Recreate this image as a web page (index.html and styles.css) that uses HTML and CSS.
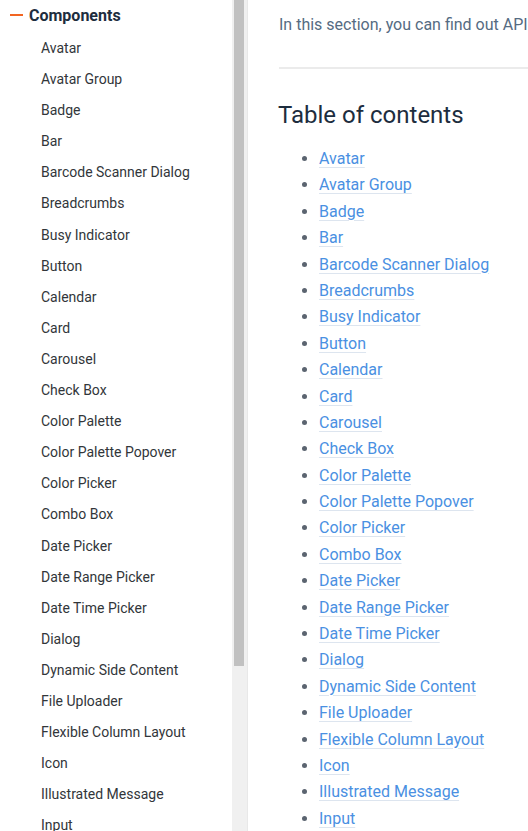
FILE: index.html
```html
<!DOCTYPE html>
<html>
<head>
<meta charset="utf-8">
<link rel="stylesheet" href="styles.css">
</head>
<body>
<div class="page">
  <nav class="sidebar">
    <div class="group-title"><span class="dash"></span>Components</div>
    <ul class="nav-list">
      <li>Avatar</li>
      <li>Avatar Group</li>
      <li>Badge</li>
      <li>Bar</li>
      <li>Barcode Scanner Dialog</li>
      <li>Breadcrumbs</li>
      <li>Busy Indicator</li>
      <li>Button</li>
      <li>Calendar</li>
      <li>Card</li>
      <li>Carousel</li>
      <li>Check Box</li>
      <li>Color Palette</li>
      <li>Color Palette Popover</li>
      <li>Color Picker</li>
      <li>Combo Box</li>
      <li>Date Picker</li>
      <li>Date Range Picker</li>
      <li>Date Time Picker</li>
      <li>Dialog</li>
      <li>Dynamic Side Content</li>
      <li>File Uploader</li>
      <li>Flexible Column Layout</li>
      <li>Icon</li>
      <li>Illustrated Message</li>
      <li>Input</li>
    </ul>
  </nav>
  <div class="scrollbar"><div class="thumb"></div></div>
  <main class="content">
    <p class="intro">In this section, you can find out API reference and examples for each component.</p>
    <hr class="rule">
    <h2 class="toc-title">Table of contents</h2>
    <ul class="toc">
      <li><a href="#">Avatar</a></li>
      <li><a href="#">Avatar Group</a></li>
      <li><a href="#">Badge</a></li>
      <li><a href="#">Bar</a></li>
      <li><a href="#">Barcode Scanner Dialog</a></li>
      <li><a href="#">Breadcrumbs</a></li>
      <li><a href="#">Busy Indicator</a></li>
      <li><a href="#">Button</a></li>
      <li><a href="#">Calendar</a></li>
      <li><a href="#">Card</a></li>
      <li><a href="#">Carousel</a></li>
      <li><a href="#">Check Box</a></li>
      <li><a href="#">Color Palette</a></li>
      <li><a href="#">Color Palette Popover</a></li>
      <li><a href="#">Color Picker</a></li>
      <li><a href="#">Combo Box</a></li>
      <li><a href="#">Date Picker</a></li>
      <li><a href="#">Date Range Picker</a></li>
      <li><a href="#">Date Time Picker</a></li>
      <li><a href="#">Dialog</a></li>
      <li><a href="#">Dynamic Side Content</a></li>
      <li><a href="#">File Uploader</a></li>
      <li><a href="#">Flexible Column Layout</a></li>
      <li><a href="#">Icon</a></li>
      <li><a href="#">Illustrated Message</a></li>
      <li><a href="#">Input</a></li>
    </ul>
  </main>
</div>
</body>
</html>
```
FILE: styles.css
```css
html, body {
  margin: 0;
  padding: 0;
  background: #ffffff;
}
body {
  font-family: Roboto, "Noto Sans", "Liberation Sans", sans-serif;
  width: 528px;
  height: 831px;
  overflow: hidden;
}
.page {
  display: flex;
  height: 831px;
  overflow: hidden;
}
.sidebar {
  width: 232px;
  flex: 0 0 232px;
  overflow: hidden;
  color: #32363a;
}
.group-title {
  display: flex;
  align-items: center;
  height: 30px;
  padding-left: 10px;
  font-size: 16px;
  font-weight: 700;
  color: #1d2d3e;
}
.dash {
  width: 13px;
  height: 2px;
  background: #f26522;
  margin-right: 6px;
}
.nav-list {
  list-style: none;
  margin: 0;
  padding: 3px 0 0 41px;
  font-size: 14px;
}
.nav-list li {
  height: 31.1px;
  line-height: 31.1px;
  white-space: nowrap;
}
.scrollbar {
  flex: 0 0 16px;
  width: 16px;
  background: #f0f0f0;
  border-right: 1px solid #e8e8e8;
  box-sizing: border-box;
}
.thumb {
  height: 666px;
  margin: 0 3px 0 2px;
  background: #c1c1c1;
}
.content {
  flex: 1;
  min-width: 0;
  padding-left: 30px;
  white-space: nowrap;
  overflow: hidden;
}
.intro {
  margin: 13px 0 0 1px;
  font-size: 16px;
  line-height: 24px;
  color: #556b82;
}
.rule {
  border: 0;
  height: 2px;
  background: #ebebeb;
  margin: 30px 0 0 1px;
  width: 400px;
}
.toc-title {
  margin: 30px 0 0 0;
  font-size: 24px;
  font-weight: 400;
  line-height: 32px;
  color: #1d2d3e;
}
.toc {
  margin: 15px 0 0 0;
  padding-left: 41px;
  font-size: 16px;
  color: #5b6470;
}
.toc li {
  height: 26.4px;
  line-height: 26.4px;
}
.toc a {
  color: #4a90e2;
  text-decoration: underline;
  text-decoration-color: #dde5ef;
  text-underline-offset: 3px;
}
```
